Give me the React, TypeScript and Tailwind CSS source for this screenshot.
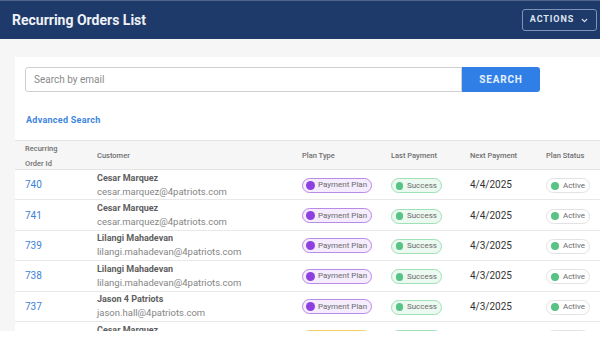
import React from 'react';

type Row = {
  id: string;
  name: string;
  email: string;
  next: string;
  plan?: 'purple' | 'yellow';
};

const rows: Row[] = [
  { id: '740', name: 'Cesar Marquez', email: 'cesar.marquez@4patriots.com', next: '4/4/2025' },
  { id: '741', name: 'Cesar Marquez', email: 'cesar.marquez@4patriots.com', next: '4/4/2025' },
  { id: '739', name: 'Lilangi Mahadevan', email: 'lilangi.mahadevan@4patriots.com', next: '4/3/2025' },
  { id: '738', name: 'Lilangi Mahadevan', email: 'lilangi.mahadevan@4patriots.com', next: '4/3/2025' },
  { id: '737', name: 'Jason 4 Patriots', email: 'jason.hall@4patriots.com', next: '4/3/2025' },
  { id: '736', name: 'Cesar Marquez', email: 'cesar.marquez@4patriots.com', next: '4/3/2025', plan: 'yellow' },
];

const cols = 'grid grid-cols-[72px_205px_89px_79px_76px_1fr]';

function PlanBadge({ tone }: { tone?: 'purple' | 'yellow' }) {
  if (tone === 'yellow') {
    return (
      <span className="inline-flex h-[15px] w-[69px] items-center gap-1 rounded-full border border-[#f2cf63] bg-[#fff8df] px-[3px] text-[8px] text-[#6b6b6b]">
        <span className="h-[9px] w-[9px] rounded-full bg-[#e8b21f]" />
        One Time
      </span>
    );
  }
  return (
    <span className="inline-flex h-[15px] w-[70px] items-center gap-[3px] rounded-full border border-[#b98ae6] bg-[#f5ecfd] px-[3px] text-[8px] text-[#6b6b6b]">
      <span className="h-[9px] w-[9px] rounded-full bg-[#8e3fe0]" />
      Payment Plan
    </span>
  );
}

function SuccessBadge() {
  return (
    <span className="inline-flex h-[15px] w-[51px] items-center gap-[4px] rounded-full border border-[#9fe0b7] bg-[#ebf9f0] px-[4px] text-[8px] text-[#6b6b6b]">
      <span className="h-[8px] w-[8px] rounded-full bg-[#57c384]" />
      Success
    </span>
  );
}

function ActiveBadge() {
  return (
    <span className="inline-flex h-[15px] w-[44px] items-center gap-[4px] rounded-full border border-[#e2e2e2] bg-white px-[4px] text-[8px] text-[#6b6b6b]">
      <span className="h-[8px] w-[8px] rounded-full bg-[#57c384]" />
      Active
    </span>
  );
}

export default function App() {
  return (
    <div className="h-[338px] w-[600px] overflow-hidden bg-white font-['Roboto','Liberation_Sans',sans-serif]">
      <div className="h-[331px] overflow-hidden bg-[#f6f6f6]">
        <header className="flex h-[39px] items-center justify-between border-t border-[#50648c] bg-[#1e3a6b] pl-3 pr-[3px]">
          <h1 className="text-[14px] font-bold text-[#eef1f6]">Recurring Orders List</h1>
          <button className="flex h-[22px] w-[75px] items-center justify-center gap-[6px] rounded-[3px] border border-[#7f93b8] text-[9px] font-bold tracking-[0.1em] text-[#dfe5ef]">
            ACTIONS
            <svg width="9" height="9" viewBox="0 0 24 24" fill="none" stroke="currentColor" strokeWidth="3.5" strokeLinecap="round" strokeLinejoin="round">
              <path d="M6 9l6 6 6-6" />
            </svg>
          </button>
        </header>

        <div className="ml-[15px] mt-[18px]">
          <section className="h-[83px] bg-white pl-[10px] pt-[10px]">
            <div className="flex h-[25px]">
              <div className="flex w-[437px] items-center rounded-l-[3px] border border-[#cfcfcf] pl-[8px] text-[10px] text-[#8a8a8a]">
                Search by email
              </div>
              <button className="w-[78px] rounded-r-[3px] bg-[#2f7fe6] text-[10px] font-bold tracking-[0.08em] text-[#e6f0fd]">
                SEARCH
              </button>
            </div>
            <div className="mt-[22px] pl-px text-[9px] font-bold tracking-[0.03em] text-[#3d86e0]">
              Advanced Search
            </div>
          </section>

          <div className="bg-white">
            <div className={`${cols} h-[30px] items-center border-y border-[#e4e4e4] bg-[#f6f6f6] text-[7.5px] font-medium text-[#707070]`}>
              <div className="pl-[10px] leading-[15px]">
                Recurring
                <br />
                Order Id
              </div>
              <div className="pl-[10px]">Customer</div>
              <div className="pl-[10px]">Plan Type</div>
              <div className="pl-[10px]">Last Payment</div>
              <div className="pl-[10px]">Next Payment</div>
              <div className="pl-[10px]">Plan Status</div>
            </div>
            {rows.map((r) => (
              <div key={r.id} className={`${cols} h-[30.4px] items-center border-b border-[#e8e8e8]`}>
                <div className="pl-[10px] text-[10px] text-[#3b82d8]">{r.id}</div>
                <div className="pl-[10px] leading-[14px]">
                  <div className="text-[9px] font-bold text-[#5e5e5e]">{r.name}</div>
                  <div className="text-[9.5px] text-[#858585]">{r.email}</div>
                </div>
                <div className="pl-[10px]">
                  <PlanBadge tone={r.plan} />
                </div>
                <div className="pl-[10px]">
                  <SuccessBadge />
                </div>
                <div className="pl-[10px] text-[10px] text-[#333]">{r.next}</div>
                <div className="pl-[10px]">
                  <ActiveBadge />
                </div>
              </div>
            ))}
          </div>
        </div>
      </div>
    </div>
  );
}
